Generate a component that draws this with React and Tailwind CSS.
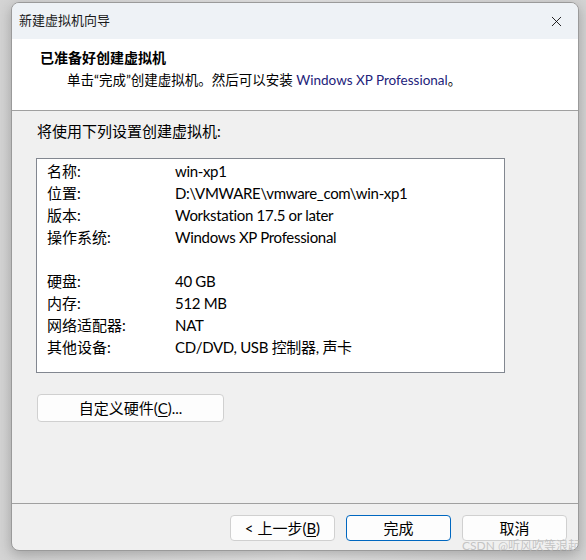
import { X } from "lucide-react";

const font = { fontFamily: 'Lato, "Noto Sans CJK SC", sans-serif' };

const rows = [
  ["名称:", "win-xp1"],
  ["位置:", "D:\\VMWARE\\vmware_com\\win-xp1"],
  ["版本:", "Workstation 17.5 or later"],
  ["操作系统:", "Windows XP Professional"],
  null,
  ["硬盘:", "40 GB"],
  ["内存:", "512 MB"],
  ["网络适配器:", "NAT"],
  ["其他设备:", "CD/DVD, USB 控制器, 声卡"],
];

function WizardButton({ children, primary }) {
  return (
    <button
      className={
        primary
          ? "w-[105px] h-[26px] rounded-[4px] border border-[#0067c0] bg-[#fdfdfd] text-[15px] text-black"
          : "w-[105px] h-[26px] rounded-[4px] border border-[#d0d0d0] bg-[#fdfdfd] text-[15px] text-black"
      }
    >
      {children}
    </button>
  );
}

export default function App() {
  return (
    <div
      className="relative w-[586px] h-[560px] overflow-hidden bg-gradient-to-r from-[#d4d4d4] via-[#e6e6e6] to-[#d4d4d4] pl-[11px] pt-[2px]"
      style={font}
    >
      <div className="w-[568px] h-[549px] flex flex-col rounded-[8px] border border-[#9a9a9a] bg-[#f0f0f0] overflow-hidden shadow-[0_4px_14px_rgba(0,0,0,0.25)]">
        {/* title bar */}
        <div className="h-[36px] flex items-center justify-between bg-[#eef2f6] pl-[7px] pr-[13px]">
          <span className="text-[13px] text-[#1a1a1a]">新建虚拟机向导</span>
          <X size={17} strokeWidth={1.2} className="text-black" />
        </div>

        {/* header */}
        <div className="h-[72px] bg-white border-b border-[#a0a0a0] pl-[28px] pt-[8px]">
          <div className="text-[14px] font-bold leading-[22px] text-black">已准备好创建虚拟机</div>
          <div className="pl-[27px] text-[13.5px] leading-[22px] text-black">
            单击“完成”创建虚拟机。然后可以安装{" "}
            <span className="text-[#22227a]">Windows XP Professional</span>。
          </div>
        </div>

        {/* body */}
        <div className="flex-1 pl-[24px] pt-[10px]">
          <div className="pl-[1px] text-[15px] leading-[20px] text-black">将使用下列设置创建虚拟机:</div>
          <div className="mt-[17px] w-[469px] h-[215px] border border-[#828790] bg-white pl-[10px] pt-[1px]">
            {rows.map((r, i) =>
              r ? (
                <div key={i} className="flex h-[22px] items-center text-[15px] text-black">
                  <span className="w-[128px]">{r[0]}</span>
                  <span className="tracking-[-0.3px]">{r[1]}</span>
                </div>
              ) : (
                <div key={i} className="h-[22px]" />
              )
            )}
          </div>
          <button className="mt-[21px] ml-[1px] w-[187px] h-[28px] rounded-[4px] border border-[#d0d0d0] bg-[#fdfdfd] text-[15px] text-black">
            自定义硬件(<span className="underline underline-offset-2">C</span>)...
          </button>
        </div>

        {/* footer */}
        <div className="h-[47px] border-t border-[#a0a0a0] flex justify-end gap-[11px] pr-[11px] pt-[11px]">
          <WizardButton>
            &lt; 上一步(<span className="underline underline-offset-2">B</span>)
          </WizardButton>
          <WizardButton primary>完成</WizardButton>
          <WizardButton>取消</WizardButton>
        </div>
      </div>

      <span className="absolute right-[6px] bottom-[5px] text-[12px] text-[#b8b8b8]/80">CSDN @听风吹等浪起</span>
    </div>
  );
}
